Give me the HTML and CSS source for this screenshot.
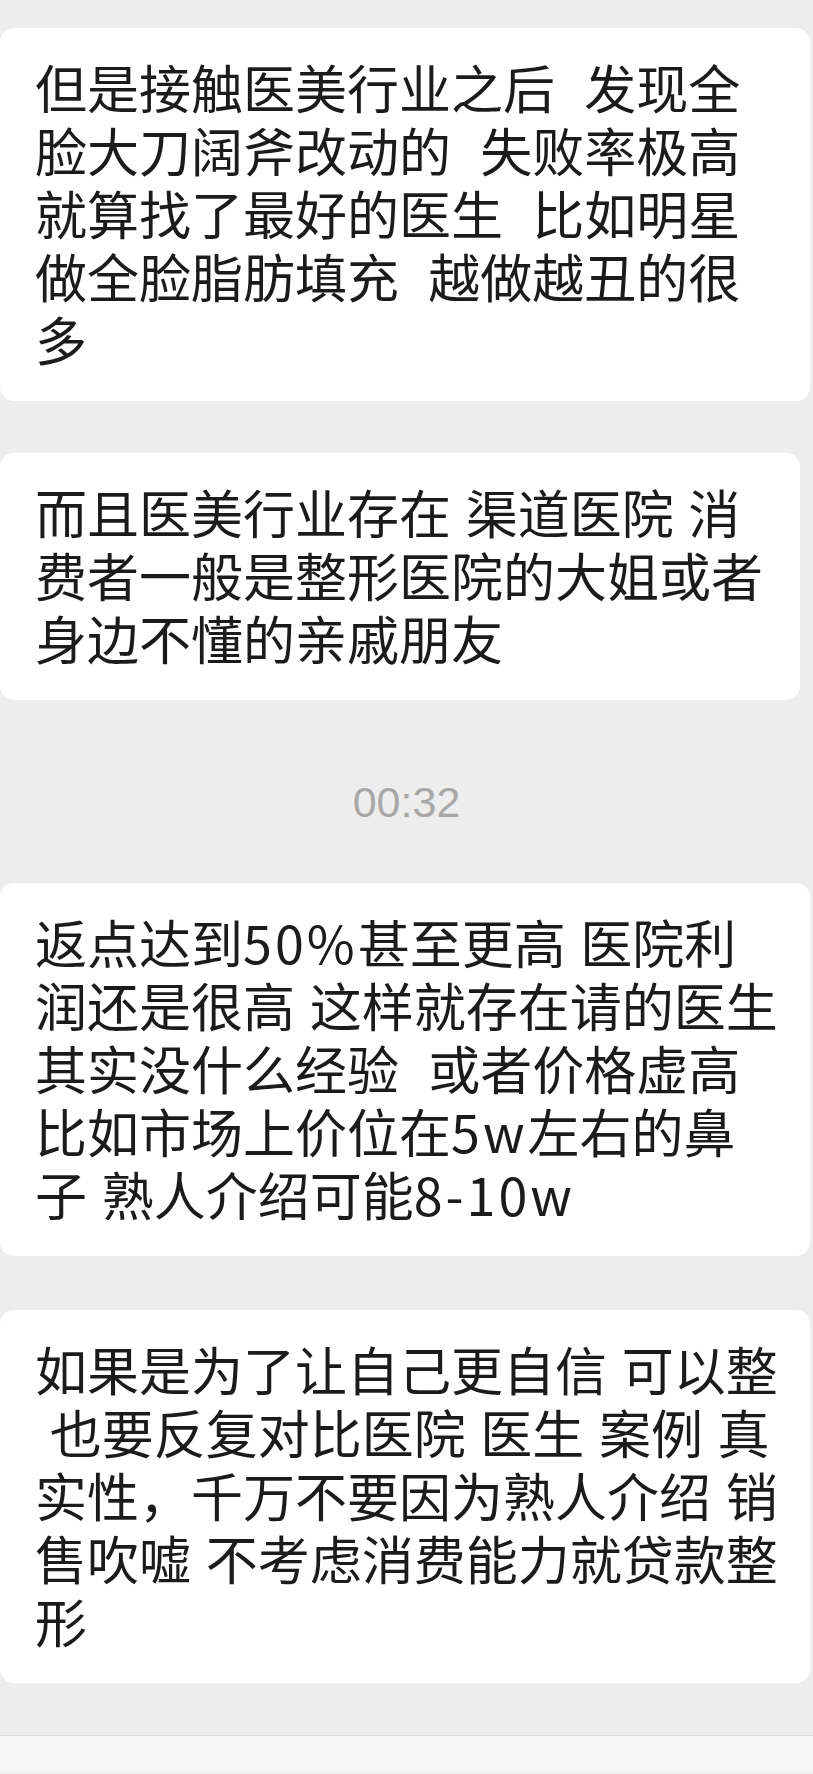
FILE: index.html
```html
<!DOCTYPE html>
<html lang="zh-CN">
<head>
    <meta charset="UTF-8">
    <meta name="viewport" content="width=device-width, initial-scale=1.0">
    <title>聊天记录</title>
    <link rel="stylesheet" href="styles.css">
</head>
<body>
    <div class="chat">
        <div class="msg">但是接触医美行业之后  发现全<br>脸大刀阔斧改动的  失败率极高<br>就算找了最好的医生  比如明星<br>做全脸脂肪填充  越做越丑的很<br>多</div>
        <div class="msg short">而且医美行业存在 渠道医院 消<br>费者一般是整形医院的大姐或者<br>身边不懂的亲戚朋友</div>
        <div class="time">00:32</div>
        <div class="msg wide-gap">返点达到<span class="en">50%</span>甚至更高 医院利<br>润还是很高 这样就存在请的医生<br>其实没什么经验  或者价格虚高<br>比如市场上价位在<span class="en">5w</span>左右的鼻<br>子 熟人介绍可能<span class="en">8-10w</span></div>
        <div class="msg">如果是为了让自己更自信 可以整<br> 也要反复对比医院 医生 案例 真<br>实性，千万不要因为熟人介绍 销<br>售吹嘘 不考虑消费能力就贷款整<br>形</div>
    </div>
    <div class="inputbar"></div>
</body>
</html>
```

FILE: styles.css
```css
*{margin:0px;padding:0px;box-sizing:border-box;}

body{background:#ededed;font-family:"Noto Sans CJK SC","Noto Sans",sans-serif;}

.chat{display:flex;flex-direction:column;padding-top:28px;}

.msg{
    background:#fff;
    color:#1b1b1b;
    font-size:52px;
    line-height:63px;
    white-space:pre;
    word-spacing:3px;
    padding:27px 20px 31px 35px;
    margin-right:3px;
    margin-bottom:52px;
    border-radius:14px;
}

.msg.short{margin-right:13px;margin-bottom:78px;}

.msg.wide-gap{margin-bottom:54px;}

.msg .en{letter-spacing:3px;}

.time{
    text-align:center;
    font-family:"Liberation Sans",Arial,sans-serif;
    font-size:43px;
    line-height:48px;
    color:#a8a8a8;
    margin-bottom:57px;
}

.inputbar{background:#f6f6f6;border-top:1px solid #d8d8d8;height:37px;}
```
